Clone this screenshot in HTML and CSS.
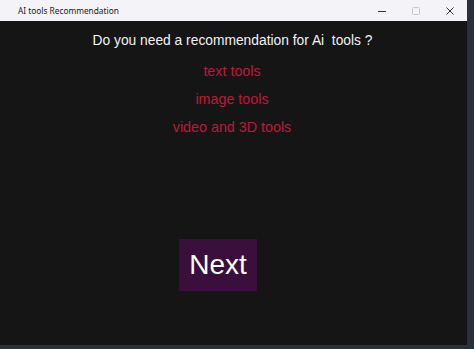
FILE: index.html
```html
<!DOCTYPE html>
<html lang="en">
<head>
    <meta charset="UTF-8">
    <meta name="viewport" content="width=device-width, initial-scale=1.0">
    <title>AI tools Recommendation</title>
    <link rel="stylesheet" href="styles.css">
</head>
<body>
    <div class="window">
        <!-- Barra de titulo -->
        <div class="titlebar">
            <span class="title">AI tools Recommendation</span>
            <div class="controls">
                <span class="ctl">
                    <svg width="8" height="8" viewBox="0 0 8 8"><path d="M0 4.5h8" stroke="#333" stroke-width="1"/></svg>
                </span>
                <span class="ctl">
                    <svg width="8" height="8" viewBox="0 0 8 8"><rect x="0.5" y="0.5" width="7" height="7" rx="1" fill="none" stroke="#c8c8c8" stroke-width="1"/></svg>
                </span>
                <span class="ctl">
                    <svg width="8" height="8" viewBox="0 0 8 8"><path d="M0.5 0.5l7 7M7.5 0.5l-7 7" stroke="#333" stroke-width="1"/></svg>
                </span>
            </div>
        </div>

        <!-- Contenido -->
        <div class="content">
            <p class="question">Do you need a recommendation for Ai  tools ?</p>
            <ul class="options">
                <li>text tools</li>
                <li>image tools</li>
                <li>video and 3D tools</li>
            </ul>
            <button class="next">Next</button>
        </div>
    </div>
</body>
</html>
```

FILE: styles.css
```css
body {
    margin: 0;
    padding: 0;
    background-color: #27313b;
    font-family: "Liberation Sans", Arial, sans-serif;
}

/* Ventana */
.window {
    width: 467px;
    height: 345px;
    display: flex;
    flex-direction: column;
    background-color: #151515;
}

.titlebar {
    height: 21px;
    background-color: #f4f3f7;
    display: flex;
    align-items: center;
    justify-content: space-between;
}

.title {
    margin-left: 18px;
    font-family: "Noto Sans", sans-serif;
    font-size: 8.3px;
    color: #1a1a1a;
}

.controls {
    display: flex;
}

.ctl {
    width: 34px;
    height: 21px;
    display: flex;
    align-items: center;
    justify-content: center;
}

/* Contenido */
.content {
    flex: 1;
    display: flex;
    flex-direction: column;
    align-items: center;
}

.question {
    margin: 12px 2px 0 0;
    color: #f2f2f2;
    font-size: 13.8px;
    white-space: pre;
}

.options {
    list-style: none;
    margin: 9px 0 0 0;
    padding: 0;
    text-align: center;
}

.options li {
    color: #c0173b;
    font-size: 14.3px;
    line-height: 28px;
    margin-right: 3px;
}

.next {
    align-self: flex-start;
    margin: 98px 0 0 179px;
    width: 78px;
    height: 52px;
    padding: 0;
    border: none;
    border-radius: 0;
    background-color: #3a0f3b;
    color: #fff;
    font-family: "Liberation Sans", Arial, sans-serif;
    font-size: 28px;
}
```
